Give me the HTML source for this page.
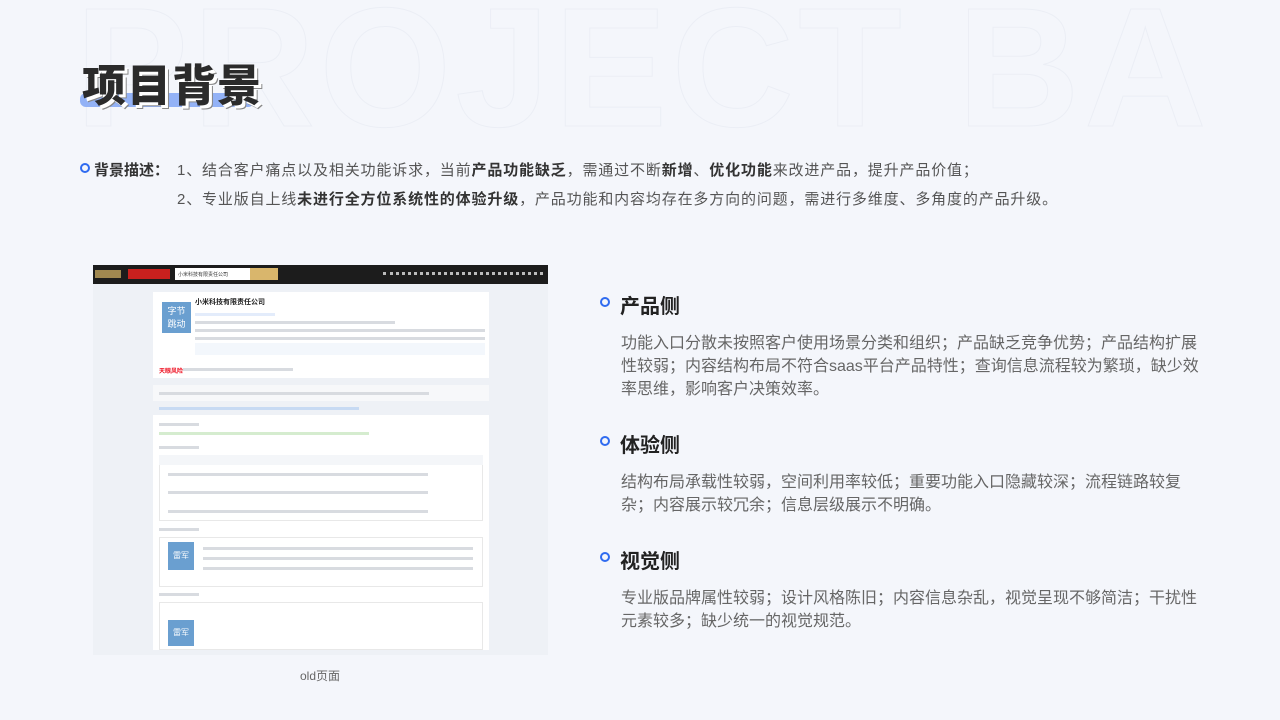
<!DOCTYPE html>
<html><head><meta charset="utf-8"><style>
*{margin:0;padding:0;box-sizing:border-box}
body{width:1280px;height:720px;overflow:hidden;background:#f4f6fb;font-family:"Liberation Sans","Noto Sans CJK SC",sans-serif;position:relative;color:#333}
.bg{position:absolute;left:75px;top:-30px;font-size:170px;font-weight:bold;color:transparent;-webkit-text-stroke:1px #ebeef5;letter-spacing:4px;white-space:nowrap}
.abs{position:absolute}
.t1{left:82px;top:50px;font-size:44px;font-weight:900;color:#2b2b2b;text-shadow:3px 3px 0 #fff,4px 4px 0 #888;z-index:2;letter-spacing:1px}
.bar{left:80px;top:93px;width:174px;height:14px;background:#93b2f6;border-radius:6px}
.dot{width:10px;height:10px;border:2.5px solid #2f6bf0;border-radius:50%}
.desc{font-size:15px;color:#555;white-space:nowrap;letter-spacing:0.85px}
.desc b{color:#333}
.h{font-size:20px;font-weight:bold;color:#222}
.p{font-size:16px;color:#666;line-height:23px;width:585px}
.shot{left:93px;top:265px;width:455px;height:390px;background:#eef1f6;overflow:hidden}
.g{background:#d8dbe0;height:3px;position:absolute}
</style></head><body>
<div class="abs bg">PROJECT BA</div>
<div class="abs bar"></div>
<div class="abs t1">项目背景</div>
<div class="abs dot" style="left:80px;top:163px"></div>
<div class="abs desc" style="left:94px;top:159px;letter-spacing:0"><b>背景描述：</b></div>
<div class="abs desc" style="left:177px;top:159px">1、结合客户痛点以及相关功能诉求，当前<b>产品功能缺乏</b>，需通过不断<b>新增</b>、<b>优化功能</b>来改进产品，提升产品价值；</div>
<div class="abs desc" style="left:177px;top:188px">2、专业版自上线<b>未进行全方位系统性的体验升级</b>，产品功能和内容均存在多方向的问题，需进行多维度、多角度的产品升级。</div>

<div class="abs shot">
 <div class="abs" style="left:0;top:0;width:455px;height:19px;background:#1c1c1c"></div>
 <div class="abs" style="left:2px;top:5px;width:26px;height:8px;background:#a08850"></div>
 <div class="abs" style="left:35px;top:4px;width:42px;height:10px;background:#c8201e"></div>
 <div class="abs" style="left:82px;top:3px;width:75px;height:12px;background:#fff;font-size:5px;padding:3px">小米科技有限责任公司</div>
 <div class="abs" style="left:157px;top:3px;width:28px;height:12px;background:#d9b66c"></div>
 <div class="abs" style="left:290px;top:7px;width:160px;height:3px;border-top:3px dotted #bbb"></div>
 <div class="abs" style="left:60px;top:27px;width:336px;height:86px;background:#fff"></div>
 <div class="abs" style="left:69px;top:37px;width:29px;height:31px;background:#6a9fd0;color:#fff;font-size:9px;text-align:center;line-height:13px;padding-top:3px">字节<br>跳动</div>
 <div class="abs" style="left:102px;top:32px;font-size:7px;font-weight:bold;color:#222">小米科技有限责任公司</div>
 <div class="g" style="left:102px;top:48px;width:80px;background:#e3ecfb"></div>
 <div class="g" style="left:102px;top:56px;width:200px"></div>
 <div class="g" style="left:102px;top:64px;width:290px"></div>
 <div class="g" style="left:102px;top:72px;width:290px"></div>
 <div class="abs" style="left:102px;top:78px;width:290px;height:12px;background:#f3f7fc"></div>
 <div class="abs" style="left:66px;top:101px;font-size:6px;color:#e12;font-weight:bold">天眼风险</div>
 <div class="g" style="left:90px;top:103px;width:110px"></div>
 <div class="abs" style="left:60px;top:120px;width:336px;height:16px;background:#f7f8fa"></div>
 <div class="g" style="left:66px;top:127px;width:270px"></div>
 <div class="g" style="left:66px;top:142px;width:200px;background:#c7daf3"></div>
 <div class="abs" style="left:60px;top:150px;width:336px;height:235px;background:#fff"></div>
 <div class="g" style="left:66px;top:158px;width:40px"></div>
 <div class="g" style="left:66px;top:167px;width:210px;background:#d5eccf"></div>
 <div class="g" style="left:66px;top:181px;width:40px"></div>
 <div class="abs" style="left:66px;top:190px;width:324px;height:66px;border:1px solid #e8e8e8"></div>
 <div class="abs" style="left:66px;top:190px;width:324px;height:10px;background:#f4f6f9"></div>
 <div class="g" style="left:75px;top:208px;width:260px"></div>
 <div class="g" style="left:75px;top:226px;width:260px"></div>
 <div class="g" style="left:75px;top:245px;width:260px"></div>
 <div class="g" style="left:66px;top:263px;width:40px"></div>
 <div class="abs" style="left:66px;top:272px;width:324px;height:50px;border:1px solid #e8e8e8"></div>
 <div class="abs" style="left:75px;top:277px;width:26px;height:28px;background:#6a9fd0;color:#fff;font-size:8px;text-align:center;line-height:28px">雷军</div>
 <div class="g" style="left:110px;top:282px;width:270px"></div>
 <div class="g" style="left:110px;top:292px;width:270px"></div>
 <div class="g" style="left:110px;top:302px;width:270px"></div>
 <div class="g" style="left:66px;top:328px;width:40px"></div>
 <div class="abs" style="left:66px;top:337px;width:324px;height:48px;border:1px solid #e8e8e8"></div>
 <div class="abs" style="left:75px;top:355px;width:26px;height:26px;background:#6a9fd0;color:#fff;font-size:8px;text-align:center;line-height:26px">雷军</div>
</div>
<div class="abs" style="left:300px;top:667px;font-size:12px;color:#666">old页面</div>

<div class="abs dot" style="left:600px;top:297px"></div>
<div class="abs h" style="left:620px;top:290px">产品侧</div>
<div class="abs p" style="left:621px;top:332px">功能入口分散未按照客户使用场景分类和组织；产品缺乏竞争优势；产品结构扩展性较弱；内容结构布局不符合saas平台产品特性；查询信息流程较为繁琐，缺少效率思维，影响客户决策效率。</div>
<div class="abs dot" style="left:600px;top:436px"></div>
<div class="abs h" style="left:620px;top:429px">体验侧</div>
<div class="abs p" style="left:621px;top:471px">结构布局承载性较弱，空间利用率较低；重要功能入口隐藏较深；流程链路较复杂；内容展示较冗余；信息层级展示不明确。</div>
<div class="abs dot" style="left:600px;top:552px"></div>
<div class="abs h" style="left:620px;top:545px">视觉侧</div>
<div class="abs p" style="left:621px;top:587px">专业版品牌属性较弱；设计风格陈旧；内容信息杂乱，视觉呈现不够简洁；干扰性元素较多；缺少统一的视觉规范。</div>
</body></html>
